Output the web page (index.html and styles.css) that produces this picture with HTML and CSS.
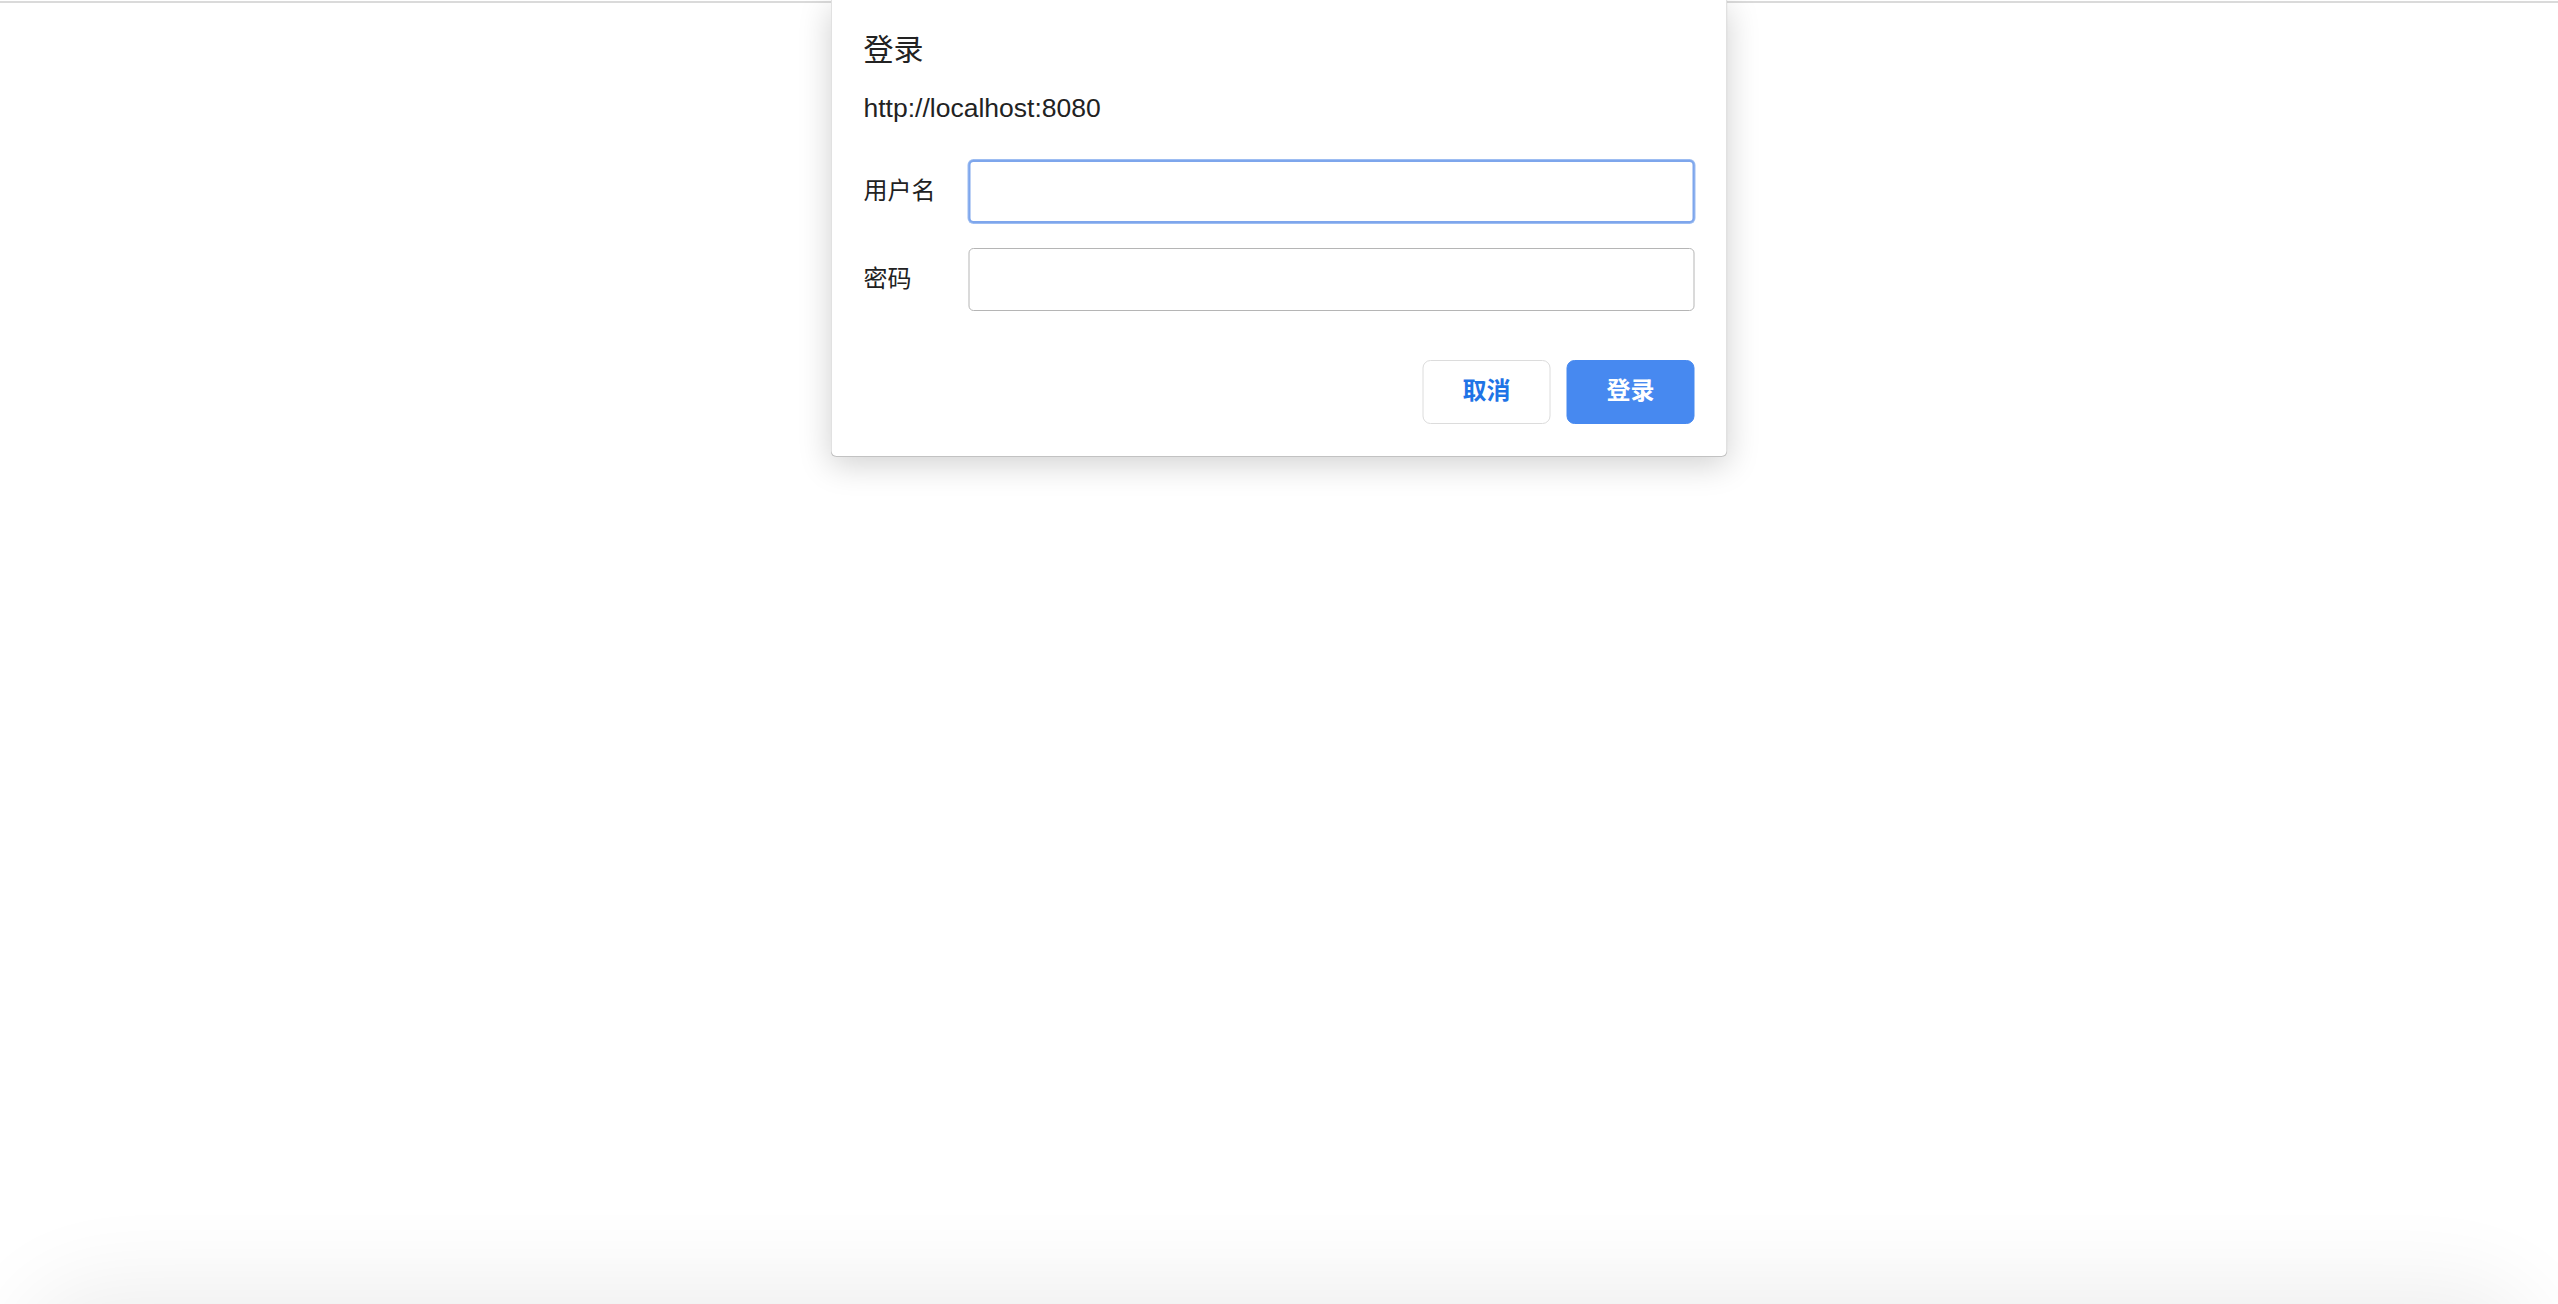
FILE: index.html
```html
<!DOCTYPE html>
<html lang="zh-CN">
<head>
<meta charset="utf-8">
<title>登录</title>
<link rel="stylesheet" href="styles.css">
</head>
<body>
<div class="topline"></div>
<div class="window-shade"></div>
<form class="dialog">
  <h1 class="dialog-title">登录</h1>
  <p class="dialog-origin">http://localhost:8080</p>
  <div class="fields">
    <label class="field">
      <span class="field-label">用户名</span>
      <input class="field-input is-focused" type="text">
    </label>
    <label class="field">
      <span class="field-label">密码</span>
      <input class="field-input" type="password">
    </label>
  </div>
  <div class="actions">
    <button type="button" class="btn btn-cancel">取消</button>
    <button type="button" class="btn btn-primary">登录</button>
  </div>
</form>
</body>
</html>
```
FILE: styles.css
```css
html, body {
  margin: 0;
  padding: 0;
  height: 1304px;
  overflow: hidden;
  background: #ffffff;
}

body {
  font-family: "Liberation Sans", "Noto Sans CJK SC", sans-serif;
  color: #222222;
  position: relative;
}

.topline {
  height: 1px;
  border-bottom: 2px solid #dadada;
}

.window-shade {
  position: fixed;
  left: 40px;
  right: 40px;
  bottom: -120px;
  height: 120px;
  border-radius: 60px;
  background: #eeeeee;
  box-shadow: 0 0 90px 20px rgba(0, 0, 0, 0.07);
}

.dialog {
  position: absolute;
  top: 0;
  left: 50%;
  transform: translateX(-50%);
  width: 831px;
  margin: 0;
  padding: 32px 32px 32px;
  background: #ffffff;
  border: 1px solid #c2c2c2;
  border-top: none;
  border-radius: 0 0 6px 6px;
  box-shadow: 0 8px 32px rgba(0, 0, 0, 0.18);
  display: flex;
  flex-direction: column;
}

.dialog-title {
  margin: 0;
  font-size: 30px;
  line-height: 36px;
  font-weight: 400;
  color: #222222;
}

.dialog-origin {
  margin: 24px 0 0;
  font-size: 26.5px;
  line-height: 32px;
  color: #222222;
}

.fields {
  margin-top: 36px;
  display: flex;
  flex-direction: column;
  gap: 25px;
}

.field {
  display: flex;
  align-items: center;
}

.field-label {
  width: 105px;
  flex: none;
  font-size: 24px;
  line-height: 30px;
  padding-bottom: 1px;
  color: #222222;
}

.field-input {
  flex: 1;
  box-sizing: border-box;
  height: 63px;
  margin: 0;
  padding: 0 12px;
  border: 1px solid #b5b5b5;
  border-radius: 5px;
  background: #ffffff;
  font-size: 24px;
  font-family: inherit;
  outline: none;
}

.field-input.is-focused {
  border: 2px solid #7ea6ec;
  box-shadow: 0 0 0 1px #9dbdf2;
}

.actions {
  margin-top: 49px;
  display: flex;
  justify-content: flex-end;
  gap: 16px;
}

.btn {
  box-sizing: border-box;
  width: 128px;
  height: 64px;
  margin: 0;
  padding: 0 0 3px;
  border-radius: 8px;
  font-family: "Liberation Sans", "Noto Sans CJK SC", sans-serif;
  font-size: 24px;
  font-weight: 700;
  line-height: 30px;
  cursor: pointer;
}

.btn-cancel {
  background: #ffffff;
  border: 1px solid #dcdcdc;
  color: #1f74e6;
}

.btn-primary {
  background: #4789f0;
  border: 1px solid #4789f0;
  color: #ffffff;
}
```
